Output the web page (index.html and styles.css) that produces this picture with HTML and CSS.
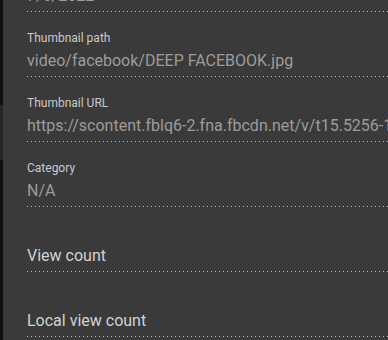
FILE: index.html
```html
<!DOCTYPE html>
<html lang="en">
<head>
    <meta charset="UTF-8">
    <title>Video details</title>
    <link rel="stylesheet" href="styles.css">
</head>
<body>
<div class="page">
    <div class="rail">
        <div class="thumb"></div>
    </div>
    <div class="form">
        <div class="field">
            <label>Date</label>
            <div class="value">7/6/2022</div>
        </div>
        <div class="field">
            <label>Thumbnail path</label>
            <div class="value">video/facebook/DEEP FACEBOOK.jpg</div>
        </div>
        <div class="field">
            <label>Thumbnail URL</label>
            <div class="value">https://scontent.fblq6-2.fna.fbcdn.net/v/t15.5256-10/289563574_1047855302529478_n.jpg</div>
        </div>
        <div class="field">
            <label>Category</label>
            <div class="value">N/A</div>
        </div>
        <div class="field empty">
            <label>View count</label>
        </div>
        <div class="field empty">
            <label>Local view count</label>
        </div>
    </div>
</div>
</body>
</html>
```

FILE: styles.css
```css
* {
    margin: 0;
    padding: 0;
    box-sizing: border-box;
}

html, body {
    height: 100%;
    overflow: hidden;
}

body {
    background-color: #3a3a3a;
    font-family: Roboto, "Liberation Sans", sans-serif;
}

.page {
    display: flex;
    height: 100%;
}

/* 左侧窄条（旁边面板的滚动条） */
.rail {
    width: 3px;
    flex-shrink: 0;
    background-color: #101010;
    padding-top: 105px;
}

.rail .thumb {
    height: 55px;
    background-color: #262626;
}

.form {
    flex: 1;
    min-width: 0;
    margin-top: -53px;
    padding-left: 24px;
}

.field {
    height: 65px;
    display: flex;
    flex-direction: column;
    justify-content: flex-end;
    padding-bottom: 6px;
    background-image: linear-gradient(to right, #bdbdbd 1px, transparent 1px);
    background-size: 4px 1px;
    background-repeat: repeat-x;
    background-position: 0 bottom;
}

.field label {
    font-size: 12px;
    line-height: 16px;
    color: #c9c9c9;
    margin-bottom: 5px;
}

.field .value {
    font-size: 16px;
    line-height: 20px;
    color: #9c9c9c;
    white-space: nowrap;
    overflow: hidden;
}

.field.empty label {
    font-size: 16px;
    line-height: 20px;
    color: #d2d2d2;
    margin-bottom: 0;
}
```
